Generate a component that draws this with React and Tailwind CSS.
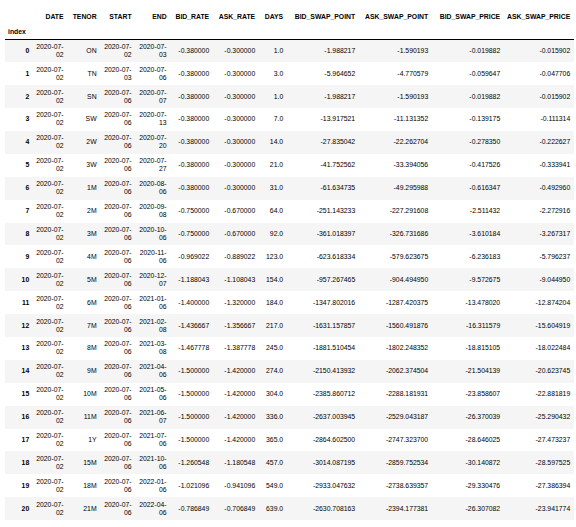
import React from 'react';

const columns = [
    { key: 'DATE', width: 'w-[34.4px]' },
    { key: 'TENOR', width: 'w-[33px]' },
    { key: 'START', width: 'w-[35px]' },
    { key: 'END', width: 'w-[35px]' },
    { key: 'BID_RATE', width: 'w-[42.6px]' },
    { key: 'ASK_RATE', width: 'w-[46px]' },
    { key: 'DAYS', width: 'w-[28px]' },
    { key: 'BID_SWAP_POINT', width: 'w-[72px]' },
    { key: 'ASK_SWAP_POINT', width: 'w-[73px]' },
    { key: 'BID_SWAP_PRICE', width: 'w-[72px]' },
    { key: 'ASK_SWAP_PRICE', width: 'w-[70px]' },
];

// tenor, start, end, bid_rate, ask_rate, days, bid_pt, ask_pt, bid_px, ask_px
const rows = [
    ['ON', '2020-07-02', '2020-07-03', '-0.380000', '-0.300000', '1.0', '-1.988217', '-1.590193', '-0.019882', '-0.015902'],
    ['TN', '2020-07-03', '2020-07-06', '-0.380000', '-0.300000', '3.0', '-5.964652', '-4.770579', '-0.059647', '-0.047706'],
    ['SN', '2020-07-06', '2020-07-07', '-0.380000', '-0.300000', '1.0', '-1.988217', '-1.590193', '-0.019882', '-0.015902'],
    ['SW', '2020-07-06', '2020-07-13', '-0.380000', '-0.300000', '7.0', '-13.917521', '-11.131352', '-0.139175', '-0.111314'],
    ['2W', '2020-07-06', '2020-07-20', '-0.380000', '-0.300000', '14.0', '-27.835042', '-22.262704', '-0.278350', '-0.222627'],
    ['3W', '2020-07-06', '2020-07-27', '-0.380000', '-0.300000', '21.0', '-41.752562', '-33.394056', '-0.417526', '-0.333941'],
    ['1M', '2020-07-06', '2020-08-06', '-0.380000', '-0.300000', '31.0', '-61.634735', '-49.295988', '-0.616347', '-0.492960'],
    ['2M', '2020-07-06', '2020-09-08', '-0.750000', '-0.670000', '64.0', '-251.143233', '-227.291608', '-2.511432', '-2.272916'],
    ['3M', '2020-07-06', '2020-10-06', '-0.750000', '-0.670000', '92.0', '-361.018397', '-326.731686', '-3.610184', '-3.267317'],
    ['4M', '2020-07-06', '2020-11-06', '-0.969022', '-0.889022', '123.0', '-623.618334', '-579.623675', '-6.236183', '-5.796237'],
    ['5M', '2020-07-06', '2020-12-07', '-1.188043', '-1.108043', '154.0', '-957.267465', '-904.494950', '-9.572675', '-9.044950'],
    ['6M', '2020-07-06', '2021-01-06', '-1.400000', '-1.320000', '184.0', '-1347.802016', '-1287.420375', '-13.478020', '-12.874204'],
    ['7M', '2020-07-06', '2021-02-08', '-1.436667', '-1.356667', '217.0', '-1631.157857', '-1560.491876', '-16.311579', '-15.604919'],
    ['8M', '2020-07-06', '2021-03-08', '-1.467778', '-1.387778', '245.0', '-1881.510454', '-1802.248352', '-18.815105', '-18.022484'],
    ['9M', '2020-07-06', '2021-04-06', '-1.500000', '-1.420000', '274.0', '-2150.413932', '-2062.374504', '-21.504139', '-20.623745'],
    ['10M', '2020-07-06', '2021-05-06', '-1.500000', '-1.420000', '304.0', '-2385.860712', '-2288.181931', '-23.858607', '-22.881819'],
    ['11M', '2020-07-06', '2021-06-07', '-1.500000', '-1.420000', '336.0', '-2637.003945', '-2529.043187', '-26.370039', '-25.290432'],
    ['1Y', '2020-07-06', '2021-07-06', '-1.500000', '-1.420000', '365.0', '-2864.602500', '-2747.323700', '-28.646025', '-27.473237'],
    ['15M', '2020-07-06', '2021-10-06', '-1.260548', '-1.180548', '457.0', '-3014.087195', '-2859.752534', '-30.140872', '-28.597525'],
    ['18M', '2020-07-06', '2022-01-06', '-1.021096', '-0.941096', '549.0', '-2933.047632', '-2738.639357', '-29.330476', '-27.386394'],
    ['21M', '2020-07-06', '2022-04-06', '-0.786849', '-0.706849', '639.0', '-2630.708163', '-2394.177381', '-26.307082', '-23.941774'],
];

// dates wrap after the second hyphen, like the squeezed notebook table
const DateCell = ({ value }) => (
    <>
        {value.slice(0, 8)}
        <br />
        {value.slice(8)}
    </>
);

const cell = 'px-[3.4px] text-right align-middle leading-[8px] whitespace-nowrap';

const App = () => {
    return (
        <div className="min-h-screen bg-white pt-[10px] pl-[4.6px] font-['Liberation_Sans',Arial,sans-serif] text-[6.85px] text-black">
            <table className="table-fixed border-collapse w-[569px]">
                <colgroup>
                    <col className="w-[28px]" />
                    {columns.map(c => <col key={c.key} className={c.width} />)}
                </colgroup>
                <thead className="border-b border-black">
                    <tr className="h-[14.7px]">
                        <th className={cell}></th>
                        {columns.map(c => (
                            <th key={c.key} className={`${cell} font-bold`}>{c.key}</th>
                        ))}
                    </tr>
                    <tr className="h-[14.7px]">
                        <th className="px-[3.4px] font-bold text-left align-middle leading-[8px]">index</th>
                        {columns.map(c => <th key={c.key} className="px-[3.4px]"></th>)}
                    </tr>
                </thead>
                <tbody>
                    {rows.map((r, i) => (
                        <tr key={i} className={`h-[22.9px] ${i % 2 === 0 ? 'bg-[#f5f5f5]' : 'bg-white'}`}>
                            <th className={`${cell} font-bold`}>{i}</th>
                            <td className={cell}><DateCell value="2020-07-02" /></td>
                            <td className={cell}>{r[0]}</td>
                            <td className={cell}><DateCell value={r[1]} /></td>
                            <td className={cell}><DateCell value={r[2]} /></td>
                            {r.slice(3).map((v, j) => (
                                <td key={j} className={cell}>{v}</td>
                            ))}
                        </tr>
                    ))}
                </tbody>
            </table>
        </div>
    );
};

export default App;
